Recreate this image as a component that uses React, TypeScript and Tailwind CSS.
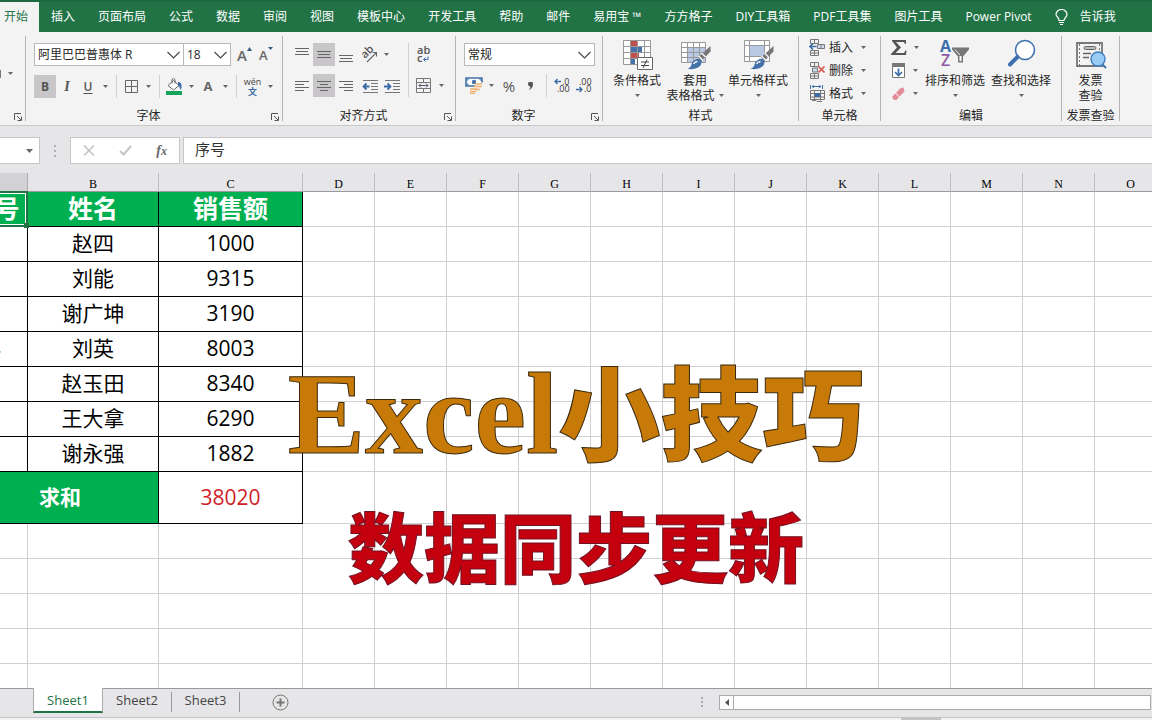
import React from 'react';

const TABS = [
  '插入', '页面布局', '公式', '数据', '审阅', '视图', '模板中心', '开发工具', '帮助', '邮件',
  '易用宝 ™', '方方格子', 'DIY工具箱', 'PDF工具集', '图片工具', 'Power Pivot',
];

const ROWS = [
  { name: '赵四', sales: 1000 },
  { name: '刘能', sales: 9315 },
  { name: '谢广坤', sales: 3190 },
  { name: '刘英', sales: 8003 },
  { name: '赵玉田', sales: 8340 },
  { name: '王大拿', sales: 6290 },
  { name: '谢永强', sales: 1882 },
];

const TOTAL = ROWS.reduce((sum, r) => sum + r.sales, 0);

// D..Z, everything right of the data
const EMPTY_COLS = 'DEFGHIJKLMNOPQRSTUVWXYZ'.split('');
const EMPTY_ROWS = Array.from({ length: 20 }, (_, i) => i);

/* ---------- small shared pieces ---------- */

function Caret() {
  return (
    <svg width="5" height="3" viewBox="0 0 5 3" className="shrink-0" aria-hidden="true">
      <path d="M0 0h5L2.5 3z" fill="#666" />
    </svg>
  );
}

function CaretButton({ label }: { label: string }) {
  return (
    <button aria-label={label} className="flex h-full w-3.5 items-center justify-center">
      <Caret />
    </button>
  );
}

interface ToolButtonProps {
  label: string;
  active?: boolean;
  narrow?: boolean;
  children: React.ReactNode;
}

function ToolButton({ label, active, narrow, children }: ToolButtonProps) {
  return (
    <button
      aria-label={label}
      className={`flex h-full items-center justify-center ${narrow ? 'w-5' : 'w-[22px]'} ${active ? 'bg-[#c8c6c8]' : ''}`}
    >
      {children}
    </button>
  );
}

function Divider() {
  return <span className="mx-1 h-full w-px bg-[#d0d0d0]" />;
}

interface GroupProps {
  title: string;
  launcher?: boolean;
  className: string;
  children: React.ReactNode;
}

function Group({ title, launcher, className, children }: GroupProps) {
  return (
    <section className={`flex h-[85px] shrink-0 flex-col justify-between border-r border-[#b4b4b4] ${className}`}>
      {children}
      <div className="flex h-2.5 items-center">
        <span className="flex-1 text-center leading-3 whitespace-nowrap">{title}</span>
        {launcher && (
          <button aria-label={`${title}设置`} className="mr-[3px] self-end">
            <svg width="8" height="8" viewBox="0 0 8 8" fill="none" stroke="#555">
              <path d="M.5 7V.5H7M3 3l4 4M7.5 3.5v4h-4" />
            </svg>
          </button>
        )}
      </div>
    </section>
  );
}

interface ComboProps {
  label: string;
  value: string;
  className: string;
}

function Combo({ label, value, className }: ComboProps) {
  return (
    <div className={`relative h-[23px] border border-[#b8b8b8] bg-white ${className}`}>
      <select aria-label={label} className="h-full w-full appearance-none bg-transparent pl-[3px] leading-5 outline-none">
        <option>{value}</option>
      </select>
      <svg className="pointer-events-none absolute top-[7px] right-[3px]" width="13" height="8" viewBox="0 0 13 8" fill="none" stroke="#444" strokeWidth="1.1">
        <path d="M.5 1l6 6 6-6" />
      </svg>
    </div>
  );
}

/* ---------- icons ---------- */

function Lines({ rows }: { rows: [number, number, number][] }) {
  return (
    <svg width="14" height="14" viewBox="0 0 14 14" stroke="#666">
      {rows.map(([y, x1, x2]) => (
        <path key={y} d={`M${x1} ${y}.5H${x2}`} />
      ))}
    </svg>
  );
}

function IndentIcon({ back }: { back?: boolean }) {
  return (
    <svg width="17" height="14" viewBox="0 0 17 14" fill="none">
      <path d="M1 1.5h15M9 4.5h7M9 7.5h7M9 10.5h7M1 13.5h15" stroke="#777" />
      <path d={back ? 'M7.5 7.5H2M4.5 4.5l-3 3 3 3' : 'M0 7.5h6M3.5 4.5l3 3-3 3'} stroke="#3b6da8" strokeWidth="1.8" />
    </svg>
  );
}

function OrientationIcon() {
  return (
    <svg width="18" height="18" viewBox="0 0 18 18" fill="none" className="overflow-visible">
      <text x="0" y="0" transform="translate(5 13) rotate(-45)" fontSize="11" fontWeight="600" fill="#555">ab</text>
      <path d="M7 16L16 7M12.500 6.500H16.500V10.500" stroke="#666" strokeWidth="1.1" />
    </svg>
  );
}

function MergeIcon() {
  return (
    <svg width="15" height="15" viewBox="0 0 15 15" fill="none" stroke="#777">
      <path d="M.5.5h14v14H.5zM.5 4.500h14M.5 10.500h14M7.500.5v4M7.500 10.500v4" />
      <path d="M3 7.500h9M5 5.500l-2 2 2 2M10 5.500l2 2-2 2" stroke="#555a70" />
    </svg>
  );
}

function WrapIcon() {
  return (
    <svg width="14" height="16" viewBox="0 0 14 16" fill="none" className="overflow-visible">
      <text x="1" y="7" fontSize="11" fontWeight="600" fill="#555">ab</text>
      <text x="1" y="15" fontSize="11" fontWeight="600" fill="#555">c</text>
      <path d="M12 9.500v3H8M9.500 10.500l-2 2 2 2" stroke="#3b6da8" />
    </svg>
  );
}

function FillIcon() {
  return (
    <svg width="17" height="17" viewBox="0 0 17 17" fill="none">
      <path d="M2 7.500l5.500-5 5.500 5-5.500 4.500z" fill="#fff" stroke="#666" />
      <path d="M6 5.500V1.500Q7.500-.5 9 1.500V5.500" stroke="#666" />
      <path d="M12 4q3 0 3.500 3t-1 5q-.5-3-2.500-5z" fill="#3b6da8" />
      <path d="M0 13h16v4H0z" fill="#15a45c" />
    </svg>
  );
}

function WenIcon() {
  return (
    <svg width="17" height="18" viewBox="0 0 17 18" className="overflow-visible">
      <text x="8.500" y="7" textAnchor="middle" fontSize="9" fill="#444">wén</text>
      <text x="8.500" y="16.500" textAnchor="middle" fontSize="9" fontWeight="700" fill="#3b6da8">文</text>
    </svg>
  );
}

function CurrencyIcon() {
  return (
    <svg width="18" height="17" viewBox="0 0 18 17" fill="none">
      <path d="M1 1h16v8H1z" fill="#fff" stroke="#4472a8" strokeWidth="1.6" />
      <path d="M1 3h2V1M15 1v2h2M1 7h2v2" stroke="#4472a8" />
      <circle cx="9" cy="5" r="2.200" fill="#4472a8" />
      <path d="M11 7h7M10 9.500h8" stroke="#f3f3f3" strokeWidth="3" />
      <path d="M10 7h7M9 9.500h8M5 12h7M10 12.500h5M5 14.500h6M5 16.500h5" stroke="#f0b070" strokeWidth="1.600" />
    </svg>
  );
}

function DecimalIcon({ more }: { more?: boolean }) {
  return (
    <svg width="16" height="15" viewBox="0 0 16 15" fill="none" className="overflow-visible">
      <text x={more ? 8 : 3} y="6.500" fontSize="9" fill="#333">{more ? '.0' : '.00'}</text>
      <text x={more ? 3 : 8} y="14" fontSize="9" fill="#333">{more ? '.00' : '.0'}</text>
      <path
        d={more ? 'M7 3.500H1M3.500 1l-2.500 2.500L3.500 6' : 'M0 11.500h6M3.500 9L6 11.500 3.500 14'}
        stroke="#3b6da8"
        strokeWidth="1.3"
      />
    </svg>
  );
}

function ConditionalIcon() {
  return (
    <svg width="31" height="31" viewBox="0 0 31 31" fill="none">
      <path d="M1.500 1.500h27v24h-27z" fill="#fff" />
      <path d="M9 2h6v5H9zM9 13h8v6H9z" fill="#c0504d" />
      <path d="M9 7h11v6H9zM9 19h4v6H9z" fill="#4472a8" />
      <path d="M1.500 1.500h27v24h-27zM1.500 7.500h27M1.500 13.500h27M1.500 19.500h27M8.500 1.500v24M15.500 1.500v24M22.500 1.500v24" stroke="#999" />
      <path d="M15.500 18.500h15v12h-15z" fill="#fff" stroke="#666" />
      <path d="M19 23h8M19 26.500h8M25 20.500l-4 8.500" stroke="#444" />
    </svg>
  );
}

function Brush() {
  return (
    <>
      <path d="M30.500 7v5.500l-9 9.500-3.500-3.500z" fill="#777" />
      <path d="M18.500 17l4.500 4.500M21.500 14l4 4" stroke="#fff" strokeWidth="1.200" />
      <path d="M15.500 20.500q3.500-2 6 1.500.5 5-4.500 7-5 2-9.500 .500 3.500-1 4-4 1-3.500 4-5z" fill="#4472a8" />
      <path d="M13.500 25q1.500-2.500 4-2.500" stroke="#fff" strokeWidth="1.300" />
    </>
  );
}

function TableFormatIcon() {
  return (
    <svg width="31" height="31" viewBox="0 0 31 31" fill="none">
      <path d="M1.500 3.500h24v20h-24z" fill="#fff" />
      <path d="M8 9h18v14H8z" fill="#b8c8e4" />
      <path d="M1.500 3.500h24v20h-24zM1.500 8.500h24M1.500 13.500h24M1.500 18.500h24M7.500 3.500v20M13.500 3.500v20M19.500 3.500v20" stroke="#999" />
      <Brush />
    </svg>
  );
}

function CellStyleIcon() {
  return (
    <svg width="31" height="31" viewBox="0 0 31 31" fill="none">
      <path d="M1.500 1.500h25v21h-25z" fill="#fff" />
      <path d="M1.500 1.500h25v21h-25zM1.500 6.500h25M1.500 17.500h25M6.500 1.500v21M21.500 1.500v21" stroke="#999" />
      <path d="M7 7h14v10H7z" fill="#b8c8e4" />
      <Brush />
    </svg>
  );
}

function InsertCellsIcon() {
  return (
    <svg width="17" height="17" viewBox="0 0 17 17" fill="none">
      <path d="M1.500.5h8v4h-8zM5.500.5v4M1.500 11.500h8v5h-8zM5.500 11.500v5M1.500 14h8" stroke="#777" />
      <path d="M8.500 5.500h7v4h-7z" fill="#cfdcee" stroke="#777" />
      <path d="M12 5.500v4" stroke="#777" />
      <path d="M7.500 7.500H1.500M4 4.500l-3 3 3 3" stroke="#3b6da8" strokeWidth="1.600" />
    </svg>
  );
}

function DeleteCellsIcon() {
  return (
    <svg width="17" height="17" viewBox="0 0 17 17" fill="none">
      <path d="M1.500.5h8v4h-8zM5.500.5v4M1.500 11.500h8v5h-8zM5.500 11.500v5M1.500 14h8" stroke="#777" />
      <path d="M3.500 6h5v4h-5z" fill="#cfdcee" stroke="#777" />
      <path d="M9.500 4.500l6 6M15.500 4.500l-6 6" stroke="#d9534f" strokeWidth="1.700" />
    </svg>
  );
}

function FormatCellsIcon() {
  return (
    <svg width="17" height="17" viewBox="0 0 17 17" fill="none">
      <path d="M1.500 0v4M13.500 0v4M3 1.500h9M5 .500l-2 1 2 1M10 .500l2 1-2 1" stroke="#3b6da8" />
      <path d="M1.500 5.500h14v9h-14zM5.500 5.500v10M11.500 5.500v10M1.500 8.500h14M1.500 12h14M3 15.500h4l1 1h5" stroke="#777" />
      <path d="M6 8h5v4H6z" fill="#3b6da8" />
    </svg>
  );
}

function SortFilterIcon() {
  return (
    <svg width="30" height="31" viewBox="0 0 30 31" fill="none" className="overflow-visible">
      <text x="0" y="13" fontSize="16" fontWeight="700" fill="#3f72ad">A</text>
      <text x="1" y="27" fontSize="16" fontWeight="600" fill="#8e5aa6">Z</text>
      <path d="M12 8.500h17v2l-6 7v6h-5v-6l-6-7z" fill="#777" />
      <path d="M19.500 17v5h2v-5z" fill="#fff" />
      <path d="M15 10.500l5 5.500" stroke="#eee" />
    </svg>
  );
}

function FindIcon() {
  return (
    <svg width="30" height="31" viewBox="0 0 30 31" fill="none">
      <circle cx="19" cy="11" r="9.500" fill="#fff" stroke="#3f72ad" strokeWidth="1.600" />
      <path d="M11.500 18L4 25.500" stroke="#3f72ad" strokeWidth="4" strokeLinecap="round" />
    </svg>
  );
}

function InvoiceIcon() {
  return (
    <svg width="32" height="31" viewBox="0 0 32 31" fill="none">
      <path d="M2 4h25v23H2z" fill="#f3f3f3" stroke="#777" strokeWidth="1.800" />
      <path d="M4.500 5v21M24.500 5v8" stroke="#777" strokeDasharray="2 2" />
      <rect x="9" y="7.500" width="12" height="3" rx="1.500" fill="#bbb" stroke="#666" />
      <path d="M8 14.500h8M8 18.500h6" stroke="#666" strokeWidth="1.400" />
      <path d="M27 25l4 4" stroke="#3f72ad" strokeWidth="2" />
      <circle cx="23" cy="20" r="7" fill="#9accf5" stroke="#3f7fc0" strokeWidth="1.400" />
    </svg>
  );
}

/* ---------- ribbon ---------- */

interface BigButtonProps {
  icon: React.ReactNode;
  lines: string[];
  caret?: boolean;
  className: string;
}

function BigButton({ icon, lines, caret, className }: BigButtonProps) {
  const inline = lines.length > 1;
  return (
    <button className={`flex shrink-0 flex-col items-center pt-[3px] leading-[15px] whitespace-nowrap ${className}`}>
      <span className="mb-[3px]">{icon}</span>
      {lines.map((line, i) => (
        <span key={line} className="flex items-center gap-1">
          {line}
          {caret && inline && i === lines.length - 1 && <Caret />}
        </span>
      ))}
      {caret && !inline && (
        <span className="flex h-[15px] items-center">
          <Caret />
        </span>
      )}
    </button>
  );
}

function CellButton({ icon, text }: { icon: React.ReactNode; text: string }) {
  return (
    <button className="flex h-[23px] items-center">
      {icon}
      <span className="mr-2 ml-[3px]">{text}</span>
      <Caret />
    </button>
  );
}

function TitleTabs() {
  return (
    <nav className="flex h-8 items-stretch overflow-hidden border-t-2 border-[#1e6a40] bg-[#217346] whitespace-nowrap text-white">
      <button className="shrink-0 bg-[#f3f3f3] pr-[11px] pl-1 text-[#217346]">开始</button>
      <div className="ml-3 flex shrink-0 gap-[23px]">
        {TABS.map(tab => (
          <button key={tab}>{tab}</button>
        ))}
        <button className="flex items-center gap-3">
          <svg width="13" height="17" viewBox="0 0 13 17" fill="none" stroke="#fff" strokeWidth="1.200">
            <path d="M4 11.500q0-2-1.500-3.500T1 5.500a5.500 5 0 0 1 11 0q0 1.500-1.500 3T9 11.500zM4 13.500h5M5 15.500h3" />
          </svg>
          告诉我
        </button>
      </div>
    </nav>
  );
}

function Ribbon() {
  return (
    <div className="flex overflow-hidden border-b border-[#c8c8c8] bg-[#f3f3f3] py-1">
      <Group title="" launcher className="w-[26px]">
        <div className="flex flex-1 items-center justify-between pr-3">
          <span className="h-2 w-px bg-[#777]" />
          <Caret />
        </div>
      </Group>

      <Group title="字体" launcher className="w-[257px]">
        <div className="flex flex-col gap-2 pt-[7px] pl-2">
          <div className="flex">
            <Combo label="字体名称" value="阿里巴巴普惠体 R" className="w-[150px]" />
            <Combo label="字号" value="18" className="-ml-px w-12" />
            <button aria-label="增大字号" className="ml-1.5 flex w-5 text-[15px] leading-6 font-semibold text-[#666]">
              A
              <svg width="5" height="4" viewBox="0 0 5 4" className="mt-1"><path d="M0 4h5L2.500 0z" fill="#3b5a88" /></svg>
            </button>
            <button aria-label="减小字号" className="ml-0.5 flex w-5 text-[13px] leading-6 font-semibold text-[#666]">
              A
              <svg width="5" height="3" viewBox="0 0 5 3" className="mt-1"><path d="M0 0h5L2.500 3z" fill="#3b5a88" /></svg>
            </button>
          </div>
          <div className="flex h-[23px] text-[#555]">
            <ToolButton label="加粗" active><b>B</b></ToolButton>
            <ToolButton label="倾斜"><i className="font-['Liberation_Serif',serif] text-sm font-bold">I</i></ToolButton>
            <ToolButton label="下划线" narrow><span className="font-semibold underline underline-offset-2">U</span></ToolButton>
            <CaretButton label="下划线样式" />
            <Divider />
            <ToolButton label="边框" narrow>
              <svg width="13" height="13" viewBox="0 0 13 13" fill="none" stroke="#666">
                <path d="M.5.5h12v12H.5zM6.500.5v12M.5 6.500h12" />
              </svg>
            </ToolButton>
            <CaretButton label="边框样式" />
            <Divider />
            <ToolButton label="填充颜色" narrow><FillIcon /></ToolButton>
            <CaretButton label="选择填充颜色" />
            <ToolButton label="字体颜色" narrow><span className="text-[13px] font-bold text-[#666]">A</span></ToolButton>
            <CaretButton label="选择字体颜色" />
            <Divider />
            <ToolButton label="拼音"><WenIcon /></ToolButton>
            <CaretButton label="拼音选项" />
          </div>
        </div>
      </Group>

      <Group title="对齐方式" launcher className="w-[173px]">
        <div className="flex pt-[7px] pl-2">
          <div className="flex w-[114px] flex-col gap-2">
            <div className="flex h-[23px]">
              <ToolButton label="顶端对齐"><Lines rows={[[0, 0, 14], [3, 1, 13], [6, 0, 14]]} /></ToolButton>
              <ToolButton label="垂直居中" active><Lines rows={[[3, 0, 14], [6, 1, 13], [9, 0, 14]]} /></ToolButton>
              <ToolButton label="底端对齐"><Lines rows={[[7, 0, 14], [10, 1, 13], [13, 0, 14]]} /></ToolButton>
              <span className="ml-0.5 flex">
                <ToolButton label="方向" narrow><OrientationIcon /></ToolButton>
                <CaretButton label="方向选项" />
              </span>
            </div>
            <div className="flex h-[23px]">
              <ToolButton label="左对齐"><Lines rows={[[2, 0, 14], [5, 0, 9], [8, 0, 14], [11, 0, 9]]} /></ToolButton>
              <ToolButton label="居中" active><Lines rows={[[2, 0, 14], [5, 3, 11], [8, 0, 14], [11, 3, 11]]} /></ToolButton>
              <ToolButton label="右对齐"><Lines rows={[[2, 0, 14], [5, 5, 14], [8, 0, 14], [11, 5, 14]]} /></ToolButton>
              <span className="ml-0.5 flex">
                <ToolButton label="减少缩进量"><IndentIcon back /></ToolButton>
                <ToolButton label="增加缩进量"><IndentIcon /></ToolButton>
              </span>
            </div>
          </div>
          <span className="mx-[3px] w-px bg-[#d0d0d0]" />
          <div className="flex flex-col gap-2">
            <div className="flex h-[23px]">
              <ToolButton label="自动换行"><WrapIcon /></ToolButton>
            </div>
            <div className="flex h-[23px]">
              <ToolButton label="合并后居中"><MergeIcon /></ToolButton>
              <CaretButton label="合并选项" />
            </div>
          </div>
        </div>
      </Group>

      <Group title="数字" launcher className="w-[147px]">
        <div className="flex flex-col gap-2 pt-[7px] pl-2">
          <Combo label="数字格式" value="常规" className="w-[131px]" />
          <div className="flex h-[23px] text-[#555]">
            <ToolButton label="会计数字格式" narrow><CurrencyIcon /></ToolButton>
            <CaretButton label="货币选项" />
            <ToolButton label="百分比样式"><span className="text-[15px]">%</span></ToolButton>
            <ToolButton label="千位分隔样式">
              <svg width="6" height="8" viewBox="0 0 6 8"><path d="M0 2a2.500 2.500 0 1 1 5 0Q5 6 1 8 3 5 2 4.500A2.500 2.500 0 0 1 0 2z" fill="#555" /></svg>
            </ToolButton>
            <Divider />
            <ToolButton label="增加小数位数"><DecimalIcon more /></ToolButton>
            <ToolButton label="减少小数位数"><DecimalIcon /></ToolButton>
          </div>
        </div>
      </Group>

      <Group title="样式" className="w-[196px]">
        <div className="flex items-start pl-[5px]">
          <BigButton icon={<ConditionalIcon />} lines={['条件格式']} caret className="w-[58px]" />
          <BigButton icon={<TableFormatIcon />} lines={['套用', '表格格式']} caret className="w-[58px]" />
          <BigButton icon={<CellStyleIcon />} lines={['单元格样式']} caret className="w-[68px]" />
        </div>
      </Group>

      <Group title="单元格" className="w-[82px]">
        <div className="flex flex-col items-start pl-2.5">
          <CellButton icon={<InsertCellsIcon />} text="插入" />
          <CellButton icon={<DeleteCellsIcon />} text="删除" />
          <CellButton icon={<FormatCellsIcon />} text="格式" />
        </div>
      </Group>

      <Group title="编辑" className="w-[181px]">
        <div className="flex items-start pl-2.5">
          <div className="flex w-[30px] flex-col">
            <button aria-label="自动求和" className="flex h-[23px] items-center gap-[7px]">
              <svg width="16" height="15" viewBox="0 0 16 15"><path d="M1 0h14v4h-1l-1-2H5l5 5.500L4.500 13H13l1.500-2.500h1L15 15H0v-1l6-6.500L1 1z" fill="#555" /></svg>
              <Caret />
            </button>
            <button aria-label="填充" className="flex h-[23px] items-center gap-[7px]">
              <svg width="15" height="15" viewBox="0 0 15 15" fill="none">
                <path d="M1.500.5h12v14h-12z" fill="#fff" stroke="#777" />
                <path d="M1 0h13v4H1z" fill="#777" />
                <path d="M7.500 5.500v7M4 9l3.500 3.500L11 9" stroke="#3b6da8" strokeWidth="1.700" />
              </svg>
              <Caret />
            </button>
            <button aria-label="清除" className="flex h-[23px] items-center gap-[7px]">
              <svg width="15" height="14" viewBox="0 0 15 14">
                <path d="M9 1.500l3.500-1 1 4-5 5L5 6z" fill="#e58a9b" />
                <path d="M4 6.500L8 10l-2.500 3H3L1 10z" fill="#e58a9b" />
              </svg>
              <Caret />
            </button>
          </div>
          <BigButton icon={<SortFilterIcon />} lines={['排序和筛选']} caret className="w-[68px]" />
          <BigButton icon={<FindIcon />} lines={['查找和选择']} caret className="w-[64px]" />
        </div>
      </Group>

      <Group title="发票查验" className="w-[58px]">
        <BigButton icon={<InvoiceIcon />} lines={['发票', '查验']} className="w-full" />
      </Group>
    </div>
  );
}

function FormulaBar() {
  return (
    <div className="flex bg-[#e6e6e8] pt-[11px] pb-[9px]">
      <button aria-label="名称框" className="flex h-[27px] w-10 items-center justify-end border border-l-0 border-[#c6c6c6] bg-white pr-1.5">
        <svg width="7" height="4" viewBox="0 0 7 4"><path d="M0 0h7L3.500 4z" fill="#666" /></svg>
      </button>
      <div className="flex w-[30px] flex-col items-center justify-center gap-[3px]">
        <span className="size-0.5 bg-[#b0b0b0]" />
        <span className="size-0.5 bg-[#b0b0b0]" />
        <span className="size-0.5 bg-[#b0b0b0]" />
      </div>
      <div className="flex h-[27px] w-[110px] items-center justify-around border border-[#c6c6c6] bg-white">
        <button aria-label="取消">
          <svg width="12" height="11" viewBox="0 0 12 11" stroke="#c4c4c4" strokeWidth="1.600"><path d="M1 .5l10 10M11 .5l-10 10" /></svg>
        </button>
        <button aria-label="输入">
          <svg width="13" height="11" viewBox="0 0 13 11" fill="none" stroke="#c4c4c4" strokeWidth="2"><path d="M1 6l3.500 3.500L12 1" /></svg>
        </button>
        <button className="font-['Liberation_Serif',serif] text-sm leading-4 font-bold text-[#666] italic">
          f<span className="text-xs">x</span>
        </button>
      </div>
      <input
        aria-label="编辑栏"
        defaultValue="序号"
        className="ml-[3px] h-[27px] min-w-0 flex-1 border border-r-0 border-[#c6c6c6] bg-white pb-1 pl-[11px] text-[15px] text-[#333] outline-none"
      />
    </div>
  );
}

/* ---------- sheet ---------- */

const GRID = 'border-r border-b border-[#d0d0d2]';
const INK = 'p-0 pb-0.5 border-r border-b border-black';

function EmptyCells() {
  return (
    <>
      {EMPTY_COLS.map(col => (
        <td key={col} className={GRID} />
      ))}
    </>
  );
}

function Sheet() {
  return (
    <table className="-ml-[38px] w-max table-fixed border-separate border-spacing-0 bg-white text-center text-[21px] leading-7 text-black">
      <colgroup>
        <col className="w-[66px]" />
        <col className="w-[131px]" />
        <col className="w-36" />
        {EMPTY_COLS.map(col => (
          <col key={col} className="w-[72px]" />
        ))}
      </colgroup>
      <thead>
        <tr className="h-[19px] bg-[#e6e6e8] font-['Liberation_Serif',serif] text-xs leading-[14px]">
          <th className="border-r border-b border-r-[#b0b0b0] border-b-[#217346] bg-[#d2d2d4] p-0 font-normal" />
          {['B', 'C', ...EMPTY_COLS].map(col => (
            <th key={col} className="border-r border-b border-r-[#bdbdbf] border-b-[#9b9b9b] p-0 pt-1 font-normal">{col}</th>
          ))}
        </tr>
      </thead>
      <tbody>
        <tr className="h-[35px] text-[25px] font-bold text-white">
          <td className={`relative bg-[#00b050] ${INK}`}>
            序号
            {/* selection frame with its fill handle */}
            <span className="absolute -inset-px border-2 border-[#217346] shadow-[inset_0_0_0_1px_white]" />
            <span className="absolute -right-0.5 -bottom-0.5 size-[5px] bg-[#217346]" />
          </td>
          <td className={`bg-[#00b050] ${INK}`}>姓名</td>
          <td className={`bg-[#00b050] ${INK}`}>销售额</td>
          <EmptyCells />
        </tr>
        {ROWS.map((row, i) => (
          <tr key={row.name} className="h-[35px]">
            <td className={INK}>{i + 1}</td>
            <td className={INK}>{row.name}</td>
            <td className={INK}>{row.sales}</td>
            <EmptyCells />
          </tr>
        ))}
        <tr className="h-[52px]">
          <td colSpan={2} className={`bg-[#00b050] font-bold text-white ${INK}`}>求和</td>
          <td className={`text-[#d01f2b] ${INK}`}>{TOTAL}</td>
          <EmptyCells />
        </tr>
        {EMPTY_ROWS.map(i => (
          <tr key={i} className="h-[35px]">
            <td className={GRID} />
            <td className={GRID} />
            <td className={GRID} />
            <EmptyCells />
          </tr>
        ))}
      </tbody>
    </table>
  );
}

function SheetTabs() {
  return (
    <div className="flex h-[29px] shrink-0 items-start border-t border-[#999] bg-[#e6e6e8] text-[13px] leading-[22px] text-[#444]">
      <button className="-mt-px ml-[33px] h-[25px] w-[70px] border-x border-b-2 border-x-[#aaa] border-b-[#217346] bg-white text-[#217346]">
        Sheet1
      </button>
      <button className="mt-[3px] h-5 w-[69px] border-r border-[#999] pb-1 leading-4">Sheet2</button>
      <button className="mt-[3px] h-5 w-[68px] border-r border-[#999] pb-1 leading-4">Sheet3</button>
      <button aria-label="新工作表" className="mt-[5px] ml-8">
        <svg width="17" height="17" viewBox="0 0 17 17" fill="none" stroke="#777">
          <circle cx="8.500" cy="8.500" r="7.500" />
          <path d="M8.500 4.500v8M4.500 8.500h8" strokeWidth="2" />
        </svg>
      </button>
      <div className="mt-2 mr-4 ml-auto flex flex-col gap-0.5">
        <span className="size-0.5 bg-[#aaa]" />
        <span className="size-0.5 bg-[#aaa]" />
        <span className="size-0.5 bg-[#aaa]" />
      </div>
      <div className="mt-1.5 mr-px flex h-[15px] w-[37.5%] border border-[#aaa] bg-white">
        <button aria-label="向左滚动" className="flex w-3.5 items-center justify-center border-r border-[#aaa]">
          <svg width="4" height="7" viewBox="0 0 4 7"><path d="M4 0v7L0 3.500z" fill="#555" /></svg>
        </button>
      </div>
    </div>
  );
}

export default function App() {
  return (
    <div className="relative flex h-screen flex-col overflow-hidden bg-[#e6e6e8] font-['Open_Sans','Noto_Sans_CJK_SC',sans-serif] text-xs text-[#262626]">
      <TitleTabs />
      <Ribbon />
      <FormulaBar />
      <main className="min-h-0 flex-1 overflow-hidden">
        <Sheet />
      </main>
      <SheetTabs />
      <footer className="flex h-[3px] shrink-0 border-t border-[#c4c4c4] bg-[#f3f3f3]">
        <span className="mr-[211px] ml-auto w-10 bg-[#c4c4c4]" />
      </footer>

      {/* video captions over the sheet */}
      <div className="pointer-events-none absolute inset-x-0 top-[354px] flex flex-col items-center gap-[18px] whitespace-nowrap">
        <h1 className="text-[102px] leading-[120px] font-black text-[#c87a08] [-webkit-text-stroke:1px_#3a2a10]">
          <span className="font-['Liberation_Serif',serif] text-[116px]">Excel</span>小技巧
        </h1>
        <h2 className="text-[76px] leading-[112px] font-black text-[#c4000f] [-webkit-text-stroke:1px_#701020]">
          数据同步更新
        </h2>
      </div>
    </div>
  );
}
